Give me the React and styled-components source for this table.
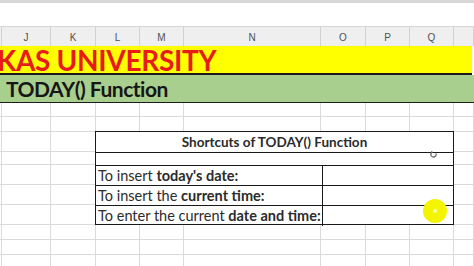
import React from 'react';
import styled, { createGlobalStyle } from 'styled-components';

const GlobalStyle = createGlobalStyle`
  html, body {
    margin: 0;
    padding: 0;
    background: #ffffff;
  }
  * {
    box-sizing: border-box;
  }
`;

const COLS = '2px 49px 45px 44px 44px 137px 45px 44px 44px 1fr';
const ROWS = '14px 15px 20px 13px 20px 20px 20px 15px 15px 15px';

const Page = styled.div`
  position: relative;
  width: 474px;
  height: 266px;
  overflow: hidden;
  display: flex;
  flex-direction: column;
  background: #ffffff;
  font-family: Lato, 'Liberation Sans', sans-serif;
`;

const TopStrip = styled.div`
  height: 3px;
  background: #d8d8d8;
  flex-shrink: 0;
`;

const FormulaArea = styled.div`
  height: 24px;
  background: #ffffff;
  border-bottom: 1px solid #d6d6d6;
  flex-shrink: 0;
`;

const HeaderRow = styled.div`
  display: grid;
  grid-template-columns: ${COLS};
  height: 19px;
  background: #efefef;
  flex-shrink: 0;
`;

const HeaderCell = styled.div`
  display: flex;
  align-items: center;
  justify-content: center;
  border-right: 1px solid #d2d2d2;
  font-family: 'Liberation Sans', Arial, sans-serif;
  font-size: 10px;
  color: #505050;
  padding-top: 2px;
`;

const Band = styled.div`
  height: ${(p) => p.$height}px;
  background: ${(p) => p.$bg};
  margin-right: ${(p) => p.$inset || 0}px;
  border-bottom: ${(p) => p.$line}px solid #1c1c1c;
  display: flex;
  align-items: center;
  overflow: hidden;
  white-space: nowrap;
  flex-shrink: 0;
`;

const BandTitle = styled.span`
  font-family: Lato, 'Liberation Sans', sans-serif;
  font-weight: 700;
  font-size: ${(p) => p.$size}px;
  color: ${(p) => p.$color};
  margin-left: ${(p) => p.$indent}px;
  letter-spacing: ${(p) => p.$spacing || 0}px;
`;

const Sheet = styled.div`
  display: grid;
  grid-template-columns: ${COLS};
  grid-template-rows: ${ROWS};
  flex-shrink: 0;
`;

const Cell = styled.div`
  border-right: 1px solid #dadada;
  border-bottom: 1px solid #dadada;
`;

const Shortcuts = styled.div`
  grid-column: 4 / 10;
  grid-row: 3 / 8;
  z-index: 1;
  margin-left: -1px;
  margin-top: -1px;
  display: grid;
  grid-template-columns: 226px 1fr;
  grid-template-rows: 21px 13px 20px 20px 20px;
  border: 1.5px solid #1a1a1a;
  background: #ffffff;
  color: #2b2b2b;
`;

const TitleCell = styled.div`
  grid-column: 1 / 3;
  display: flex;
  align-items: center;
  justify-content: center;
  font-weight: 700;
  font-size: 13.5px;
  border-bottom: 1px solid #1a1a1a;
`;

const BlankCell = styled.div`
  grid-column: 1 / 3;
  border-bottom: 1px solid #1a1a1a;
`;

const LabelCell = styled.div`
  padding-left: 2px;
  font-size: 14.5px;
  line-height: 19px;
  white-space: nowrap;
  overflow: hidden;
  border-bottom: ${(p) => (p.$last ? 'none' : '1px solid #1a1a1a')};

  b {
    font-weight: 700;
  }
`;

const ValueCell = styled.div`
  border-left: 1px solid #1a1a1a;
  border-bottom: ${(p) => (p.$last ? 'none' : '1px solid #1a1a1a')};
`;

const BusyCursor = styled.svg`
  position: absolute;
  z-index: 2;
  left: 430px;
  top: 151px;
`;

const ClickMark = styled.div`
  position: absolute;
  z-index: 2;
  left: 423px;
  top: 199px;
  width: 24px;
  height: 24px;
  border-radius: 50%;
  background: #f4f400;
  display: flex;
  align-items: center;
  justify-content: center;

  &::after {
    content: '';
    width: 4px;
    height: 4px;
    border-radius: 50%;
    background: #fdfdb0;
  }
`;

const letters = ['', 'J', 'K', 'L', 'M', 'N', 'O', 'P', 'Q', ''];

const rows = [
  { pre: 'To insert ', bold: "today's date:" },
  { pre: 'To insert the ', bold: 'current time:' },
  { pre: 'To enter the current ', bold: 'date and time:' },
];

// grid cells outside the shortcuts box (cols 4-9, rows 3-7 are taken by it)
const sheetCells = [];
for (let r = 1; r <= 10; r++) {
  for (let c = 1; c <= 10; c++) {
    const inBox = c >= 4 && c <= 9 && r >= 3 && r <= 7;
    if (!inBox) sheetCells.push(`${r}-${c}`);
  }
}

export default function App() {
  return (
    <>
      <GlobalStyle />
      <Page>
        <TopStrip />
        <FormulaArea />
        <HeaderRow>
          {letters.map((l, i) => (
            <HeaderCell key={i}>{l}</HeaderCell>
          ))}
        </HeaderRow>
        <Band $height={29} $bg="#ffff00" $line={2} $inset={2}>
          <BandTitle $size={28} $color="#e81b1b" $indent={-3} $spacing={-0.3}>
            KAS UNIVERSITY
          </BandTitle>
        </Band>
        <Band $height={28} $bg="#a9cf8f" $line={1}>
          <BandTitle $size={21} $color="#161616" $indent={6} $spacing={-0.5}>
            TODAY() Function
          </BandTitle>
        </Band>
        <Sheet>
          <Shortcuts>
            <TitleCell>Shortcuts of TODAY() Function</TitleCell>
            <BlankCell />
            {rows.map((row, i) => (
              <React.Fragment key={i}>
                <LabelCell $last={i === rows.length - 1}>
                  {row.pre}
                  <b>{row.bold}</b>
                </LabelCell>
                <ValueCell $last={i === rows.length - 1} />
              </React.Fragment>
            ))}
          </Shortcuts>
          {sheetCells.map((k) => (
            <Cell key={k} />
          ))}
        </Sheet>
        <BusyCursor width="7" height="7" viewBox="0 0 7 7">
          <path d="M5.8 2.2 A2.6 2.6 0 1 1 2 1.2" fill="none" stroke="#6a6a6a" strokeWidth="1.2" />
          <path d="M1.2 0.4 L2.6 1.2 L1.4 2.2" fill="none" stroke="#6a6a6a" strokeWidth="0.9" />
        </BusyCursor>
        <ClickMark />
      </Page>
    </>
  );
}
